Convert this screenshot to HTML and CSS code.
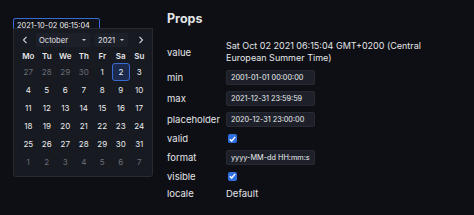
FILE: index.html
```html
<!DOCTYPE html>
<html lang="en">
<head>
<meta charset="UTF-8">
<meta name="viewport" content="width=device-width, initial-scale=1.0">
<title>DateTimePicker</title>
<link rel="stylesheet" href="styles.css">
</head>
<body>
<div class="page">
    <div class="demo">
        <div class="picker">
            <input class="picker-input" type="text" value="2021-10-02 06:15:04">
            <div class="popup">
                <div class="nav">
                    <span class="arrow">
                        <svg width="6" height="8" viewBox="0 0 6 8"><path d="M4.5 0.8 L1.5 4 L4.5 7.2" fill="none" stroke="#c9ccd3" stroke-width="1.2"/></svg>
                    </span>
                    <div class="select month">October<span class="caret"></span></div>
                    <div class="select year">2021<span class="caret"></span></div>
                    <span class="arrow">
                        <svg width="6" height="8" viewBox="0 0 6 8"><path d="M1.5 0.8 L4.5 4 L1.5 7.2" fill="none" stroke="#c9ccd3" stroke-width="1.2"/></svg>
                    </span>
                </div>
                <div class="grid">
                    <div class="wd">Mo</div><div class="wd">Tu</div><div class="wd">We</div><div class="wd">Th</div><div class="wd">Fr</div><div class="wd">Sa</div><div class="wd">Su</div>
                    <div class="day other">27</div><div class="day other">28</div><div class="day other">29</div><div class="day other">30</div><div class="day">1</div><div class="day selected">2</div><div class="day">3</div>
                    <div class="day">4</div><div class="day">5</div><div class="day">6</div><div class="day">7</div><div class="day">8</div><div class="day">9</div><div class="day">10</div>
                    <div class="day">11</div><div class="day">12</div><div class="day">13</div><div class="day">14</div><div class="day">15</div><div class="day">16</div><div class="day">17</div>
                    <div class="day">18</div><div class="day">19</div><div class="day">20</div><div class="day">21</div><div class="day">22</div><div class="day">23</div><div class="day">24</div>
                    <div class="day">25</div><div class="day">26</div><div class="day">27</div><div class="day">28</div><div class="day">29</div><div class="day">30</div><div class="day">31</div>
                    <div class="day other">1</div><div class="day other">2</div><div class="day other">3</div><div class="day other">4</div><div class="day other">5</div><div class="day other">6</div><div class="day other">7</div>
                </div>
            </div>
        </div>
    </div>

    <div class="props">
        <h3>Props</h3>
        <div class="table">
            <div class="label">value</div>
            <div class="val long">Sat Oct 02 2021 06:15:04 GMT+0200 (Central European Summer Time)</div>

            <div class="label">min</div>
            <div><input class="field" type="text" value="2001-01-01 00:00:00"></div>

            <div class="label">max</div>
            <div><input class="field" type="text" value="2021-12-31 23:59:59"></div>

            <div class="label">placeholder</div>
            <div><input class="field" type="text" value="2020-12-31 23:00:00"></div>

            <div class="label">valid</div>
            <div><span class="check"><svg width="7" height="6" viewBox="0 0 7 6"><path d="M0.8 3.2 L2.7 5 L6.2 0.9" fill="none" stroke="#fff" stroke-width="1.4"/></svg></span></div>

            <div class="label">format</div>
            <div><input class="field" type="text" value="yyyy-MM-dd HH:mm:ss"></div>

            <div class="label">visible</div>
            <div><span class="check"><svg width="7" height="6" viewBox="0 0 7 6"><path d="M0.8 3.2 L2.7 5 L6.2 0.9" fill="none" stroke="#fff" stroke-width="1.4"/></svg></span></div>

            <div class="label">locale</div>
            <div class="val">Default</div>
        </div>
    </div>
</div>
</body>
</html>
```

FILE: styles.css
```css
body {
    margin: 0;
    padding: 0;
    background: #0d0f14;
    color: #e4e5e8;
    font-family: Inter, "Noto Sans", sans-serif;
}

.page {
    display: flex;
    padding: 12px 0 0 13px;
}

.demo {
    width: 154px;
}

.picker {
    position: relative;
}

.picker-input {
    box-sizing: border-box;
    width: 87px;
    height: 16px;
    margin: 0;
    padding: 0 3px;
    background: #101219;
    border: 1.5px solid #3a6bd4;
    border-radius: 2px;
    color: #f0f1f3;
    font-family: inherit;
    font-size: 7.4px;
    outline: none;
}

.popup {
    position: absolute;
    top: 16px;
    left: 0;
    box-sizing: border-box;
    width: 140px;
    padding: 4px 4px 5px 4px;
    background: #171a21;
    border: 1px solid #272a32;
    border-radius: 0 0 3px 3px;
}

.nav {
    display: flex;
    align-items: center;
    height: 14px;
}

.arrow {
    display: flex;
    align-items: center;
    justify-content: center;
    width: 14px;
}

.select {
    display: flex;
    align-items: center;
    justify-content: space-between;
    box-sizing: border-box;
    height: 14px;
    padding: 0 4px 0 3px;
    background: #1d2028;
    border-radius: 2px;
    font-size: 7.6px;
    color: #e4e5e8;
}

.month {
    width: 54px;
    margin-left: 4px;
}

.year {
    width: 33px;
    margin-left: 5px;
    margin-right: 6px;
}

.caret {
    width: 0;
    height: 0;
    border-left: 2.5px solid transparent;
    border-right: 2.5px solid transparent;
    border-top: 2.5px solid #c9ccd3;
}

.grid {
    display: grid;
    grid-template-columns: repeat(7, 18.5px);
    grid-auto-rows: 18px;
    grid-template-rows: 13px;
    margin-top: 2.5px;
    margin-left: 1px;
}

.wd,
.day {
    display: flex;
    align-items: center;
    justify-content: center;
    font-size: 8px;
}

.wd {
    font-weight: 600;
    color: #e4e5e8;
}

.day {
    color: #ecedf0;
}

.day.other {
    color: #6a6e77;
}

.day.selected {
    box-sizing: border-box;
    width: 18px;
    height: 18px;
    margin-left: 0.5px;
    background: #1c2b4d;
    border: 1.5px solid #3a6bd4;
    border-radius: 3px;
}

.props h3 {
    margin: 0;
    height: 13px;
    line-height: 13px;
    font-size: 12.5px;
    font-weight: 700;
}

.table {
    display: grid;
    grid-template-columns: 59px 1fr;
    grid-template-rows: 24px 15px 15px 15px 11px 15px 10px 13px;
    row-gap: 6px;
    margin-top: 15px;
    font-size: 9.5px;
}

.table > div {
    display: flex;
    align-items: center;
}

.table > .long {
    align-items: flex-start;
    width: 212px;
    font-size: 9px;
    line-height: 12px;
}

.field {
    box-sizing: border-box;
    width: 89px;
    height: 15px;
    margin: 0;
    padding: 0 4px;
    background: #1d2028;
    border: 1px solid #272a32;
    border-radius: 2px;
    color: #eceef1;
    font-family: inherit;
    font-size: 7.3px;
    outline: none;
}

.check {
    display: flex;
    align-items: center;
    justify-content: center;
    width: 9px;
    height: 9px;
    margin-left: 2px;
    background: #2f6fe0;
    border-radius: 2px;
}
```
